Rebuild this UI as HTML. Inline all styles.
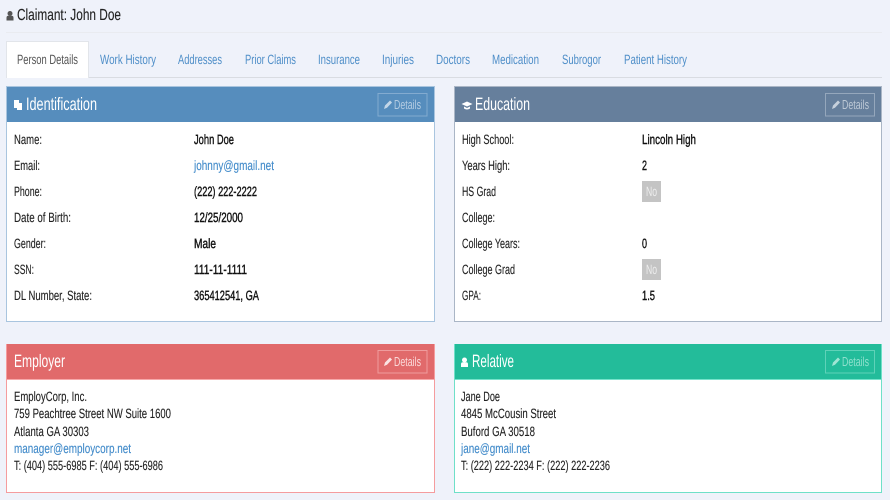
<!DOCTYPE html>
<html><head><meta charset="utf-8"><title>Claimant</title>
<style>
html,body{margin:0;padding:0;width:890px;height:500px;overflow:hidden;background:#eff2fa}
svg{display:block;filter:blur(.3px)}
text{font-family:"Liberation Sans",sans-serif;font-size:13.5px;fill:#222;stroke:#222;stroke-width:.12px;text-rendering:geometricPrecision}
.tab{fill:#4e8ec8;stroke:none;font-size:13.5px}
.lnk{fill:#428bca;stroke:#428bca}
.b{fill:#111;stroke:#111;stroke-width:.4px}
.h{font-size:18px;fill:#fff;stroke:none}
.d{stroke:none;font-size:13px}
.n{fill:#eee;stroke:none}
</style></head><body>
<svg xmlns="http://www.w3.org/2000/svg" width="890" height="500" viewBox="0 0 890 500">
<defs><g id="pen"><path d="M0 9 L1 5.500 L6 0.500 L8 2.500 L3 7.800 Z"/></g>
<g id="user"><circle cx="3.500" cy="2.500" r="2.500"/><path d="M0 9.500 V6.800 Q0 4.800 1.800 4.800 H5.200 Q7 4.800 7 6.800 V9.500 Z"/></g></defs>
<rect width="890" height="500" fill="#eff2fa"/>

<use href="#user" x="6.500" y="11" fill="#555"/>
<text x="17" y="20" style="font-size:16px" textLength="104" lengthAdjust="spacingAndGlyphs">Claimant: John Doe</text>
<rect x="6" y="32" width="876" height="1" fill="#e9ebf0"/>

<rect x="6" y="77" width="876" height="1" fill="#d9dce2"/>
<path d="M6.500 78 V41.500 H88.500 V78" fill="#fff" stroke="#e2e5ea"/>
<text x="17" y="64" style="fill:#555;stroke:none" textLength="61" lengthAdjust="spacingAndGlyphs">Person Details</text>
<text class="tab" x="100" y="64" textLength="56" lengthAdjust="spacingAndGlyphs">Work History</text>
<text class="tab" x="178" y="64" textLength="44" lengthAdjust="spacingAndGlyphs">Addresses</text>
<text class="tab" x="245" y="64" textLength="51" lengthAdjust="spacingAndGlyphs">Prior Claims</text>
<text class="tab" x="318" y="64" textLength="42" lengthAdjust="spacingAndGlyphs">Insurance</text>
<text class="tab" x="382" y="64" textLength="32" lengthAdjust="spacingAndGlyphs">Injuries</text>
<text class="tab" x="436" y="64" textLength="34" lengthAdjust="spacingAndGlyphs">Doctors</text>
<text class="tab" x="492" y="64" textLength="47" lengthAdjust="spacingAndGlyphs">Medication</text>
<text class="tab" x="562" y="64" textLength="39" lengthAdjust="spacingAndGlyphs">Subrogor</text>
<text class="tab" x="624" y="64" textLength="63" lengthAdjust="spacingAndGlyphs">Patient History</text>

<!-- Identification -->
<rect x="6.500" y="86.500" width="428" height="235" fill="#fff" stroke="#a9c5df"/>
<rect x="7" y="87" width="427" height="35" fill="#568dbd"/>
<path d="M14 100 H19 V103 H22 V110 H17 V108 H14 Z" fill="#fff"/>
<text class="h" x="26" y="110" textLength="71" lengthAdjust="spacingAndGlyphs">Identification</text>
<rect x="378" y="93.500" width="49" height="22.500" fill="none" stroke="#83abd0"/>
<use href="#pen" x="384" y="100" fill="#c3d6e8"/>
<text class="d" x="394" y="109" style="fill:#b4cce2" textLength="27" lengthAdjust="spacingAndGlyphs">Details</text>

<text x="14" y="144" textLength="28" lengthAdjust="spacingAndGlyphs">Name:</text>
<text x="14" y="170" textLength="26" lengthAdjust="spacingAndGlyphs">Email:</text>
<text x="14" y="196" textLength="28" lengthAdjust="spacingAndGlyphs">Phone:</text>
<text x="14" y="222" textLength="57" lengthAdjust="spacingAndGlyphs">Date of Birth:</text>
<text x="14" y="248" textLength="32" lengthAdjust="spacingAndGlyphs">Gender:</text>
<text x="14" y="274" textLength="20" lengthAdjust="spacingAndGlyphs">SSN:</text>
<text x="14" y="300" textLength="78" lengthAdjust="spacingAndGlyphs">DL Number, State:</text>
<text class="b" x="194" y="144" textLength="40" lengthAdjust="spacingAndGlyphs">John Doe</text>
<text class="lnk" x="194" y="170" textLength="80" lengthAdjust="spacingAndGlyphs">johnny@gmail.net</text>
<text class="b" x="194" y="196" textLength="63" lengthAdjust="spacingAndGlyphs">(222) 222-2222</text>
<text class="b" x="194" y="222" textLength="49" lengthAdjust="spacingAndGlyphs">12/25/2000</text>
<text class="b" x="194" y="248" textLength="22" lengthAdjust="spacingAndGlyphs">Male</text>
<text class="b" x="194" y="274" textLength="53" lengthAdjust="spacingAndGlyphs">111-11-1111</text>
<text class="b" x="194" y="300" textLength="65" lengthAdjust="spacingAndGlyphs">365412541, GA</text>

<!-- Education -->
<rect x="454.500" y="86.500" width="427" height="235" fill="#fff" stroke="#aab6c6"/>
<rect x="455" y="87" width="426" height="35" fill="#667f9c"/>
<path d="M461.500 104 L467 101.500 L472.500 104 L467 106.500 Z M464 106.500 L467 108 L470 106.500 V108.500 Q467 110.500 464 108.500 Z" fill="#fff"/>
<text class="h" x="475" y="110" textLength="55" lengthAdjust="spacingAndGlyphs">Education</text>
<rect x="825.500" y="93.500" width="49" height="22.500" fill="none" stroke="#95a7bc"/>
<use href="#pen" x="832" y="100" fill="#c6d0dc"/>
<text class="d" x="842" y="109" style="fill:#bcc8d5" textLength="27" lengthAdjust="spacingAndGlyphs">Details</text>

<text x="462" y="144" textLength="52" lengthAdjust="spacingAndGlyphs">High School:</text>
<text x="462" y="170" textLength="48" lengthAdjust="spacingAndGlyphs">Years High:</text>
<text x="462" y="196" textLength="34" lengthAdjust="spacingAndGlyphs">HS Grad</text>
<text x="462" y="222" textLength="33" lengthAdjust="spacingAndGlyphs">College:</text>
<text x="462" y="248" textLength="58" lengthAdjust="spacingAndGlyphs">College Years:</text>
<text x="462" y="274" textLength="53" lengthAdjust="spacingAndGlyphs">College Grad</text>
<text x="462" y="300" textLength="19" lengthAdjust="spacingAndGlyphs">GPA:</text>
<text class="b" x="642" y="144" textLength="54" lengthAdjust="spacingAndGlyphs">Lincoln High</text>
<text class="b" x="642" y="170" textLength="5" lengthAdjust="spacingAndGlyphs">2</text>
<rect x="642" y="181" width="19" height="21" fill="#c4c4c4"/>
<text class="n" x="646" y="196" textLength="11" lengthAdjust="spacingAndGlyphs">No</text>
<text class="b" x="642" y="248" textLength="5" lengthAdjust="spacingAndGlyphs">0</text>
<rect x="642" y="259" width="19" height="21" fill="#c4c4c4"/>
<text class="n" x="646" y="274" textLength="11" lengthAdjust="spacingAndGlyphs">No</text>
<text class="b" x="642" y="300" textLength="13" lengthAdjust="spacingAndGlyphs">1.5</text>

<!-- Employer -->
<rect x="6.500" y="344.500" width="428" height="148" fill="#fff" stroke="#f59c9e"/>
<rect x="7" y="344" width="427" height="35" fill="#e16a6b"/>
<rect x="7" y="379" width="427" height="1" fill="#f7a9aa"/>
<text class="h" x="14" y="367" textLength="51" lengthAdjust="spacingAndGlyphs">Employer</text>
<rect x="378" y="350.500" width="49" height="22.500" fill="none" stroke="#ef9c9d"/>
<use href="#pen" x="384" y="357" fill="#fbe3e3"/>
<text class="d" x="394" y="366" style="fill:#fad9d9" textLength="27" lengthAdjust="spacingAndGlyphs">Details</text>
<text x="14" y="401" textLength="73" lengthAdjust="spacingAndGlyphs">EmployCorp, Inc.</text>
<text x="14" y="418" textLength="157" lengthAdjust="spacingAndGlyphs">759 Peachtree Street NW Suite 1600</text>
<text x="14" y="436" textLength="75" lengthAdjust="spacingAndGlyphs">Atlanta GA 30303</text>
<text class="lnk" x="14" y="453" textLength="117" lengthAdjust="spacingAndGlyphs">manager@employcorp.net</text>
<text x="14" y="470" textLength="149" lengthAdjust="spacingAndGlyphs">T: (404) 555-6985 F: (404) 555-6986</text>

<!-- Relative -->
<rect x="454.500" y="344.500" width="427" height="148" fill="#fff" stroke="#6fe0c8"/>
<rect x="455" y="344" width="426" height="35" fill="#23bc9a"/>
<rect x="455" y="379" width="426" height="1" fill="#76e3cb"/>
<use href="#user" x="461" y="357.500" fill="#fff"/>
<text class="h" x="472" y="367" textLength="42" lengthAdjust="spacingAndGlyphs">Relative</text>
<rect x="825.500" y="350.500" width="49" height="22.500" fill="none" stroke="#5fd2b8"/>
<use href="#pen" x="832" y="357" fill="#9fe5d4"/>
<text class="d" x="842" y="366" style="fill:#8fe0cd" textLength="27" lengthAdjust="spacingAndGlyphs">Details</text>
<text x="461" y="401" textLength="39" lengthAdjust="spacingAndGlyphs">Jane Doe</text>
<text x="461" y="418" textLength="95" lengthAdjust="spacingAndGlyphs">4845 McCousin Street</text>
<text x="461" y="436" textLength="74" lengthAdjust="spacingAndGlyphs">Buford GA 30518</text>
<text class="lnk" x="461" y="453" textLength="69" lengthAdjust="spacingAndGlyphs">jane@gmail.net</text>
<text x="461" y="470" textLength="149" lengthAdjust="spacingAndGlyphs">T: (222) 222-2234 F: (222) 222-2236</text>
</svg>
</body></html>
